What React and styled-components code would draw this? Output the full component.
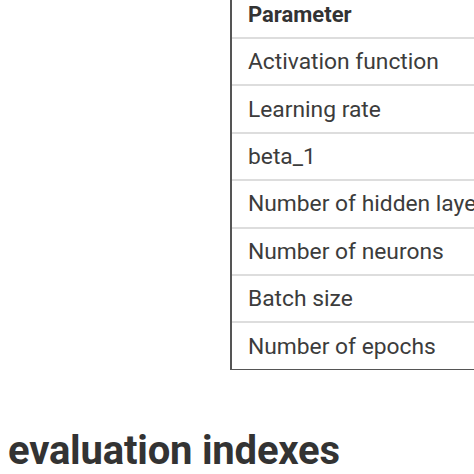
import React from "react";
import styled, { createGlobalStyle } from "styled-components";

const Global = createGlobalStyle`
  html, body {
    margin: 0;
    padding: 0;
    background: #ffffff;
  }
  body {
    font-family: Roboto, "Liberation Sans", sans-serif;
    color: #333333;
  }
`;

const Page = styled.main`
  width: 474px;
  height: 474px;
  overflow: hidden;
  display: flex;
  flex-direction: column;
`;

const TableWrap = styled.section`
  margin-top: -8px;
  padding: 0 0 3px 230px;
  overflow: hidden;
`;

const Table = styled.table`
  border-collapse: separate;
  border-spacing: 0;
  width: 400px;
  border-left: 2px solid #555555;
  border-bottom: 2px solid #555555;

  td,
  th {
    padding: 0 0 0 16px;
    text-align: left;
    font-size: 22.8px;
    white-space: nowrap;
    color: #3c3c3c;
    border-top: 2px solid #dddddd;
  }

  td {
    height: 45.4px;
  }

  th {
    height: 45px;
    font-weight: 700;
    font-size: 22px;
    color: #333333;
    border-top: none;
  }
`;

const Heading = styled.h2`
  margin: 57px 0 0 8px;
  font-size: 40px;
  font-weight: 700;
  color: #333333;
  letter-spacing: -0.2px;
  white-space: nowrap;
`;

const rows = [
  "Activation function",
  "Learning rate",
  "beta_1",
  "Number of hidden layers",
  "Number of neurons",
  "Batch size",
  "Number of epochs",
];

export default function App() {
  return (
    <Page>
      <Global />
      <TableWrap>
        <Table>
          <thead>
            <tr>
              <th>Parameter</th>
            </tr>
          </thead>
          <tbody>
            {rows.map((r) => (
              <tr key={r}>
                <td>{r}</td>
              </tr>
            ))}
          </tbody>
        </Table>
      </TableWrap>
      <Heading>evaluation indexes</Heading>
    </Page>
  );
}
